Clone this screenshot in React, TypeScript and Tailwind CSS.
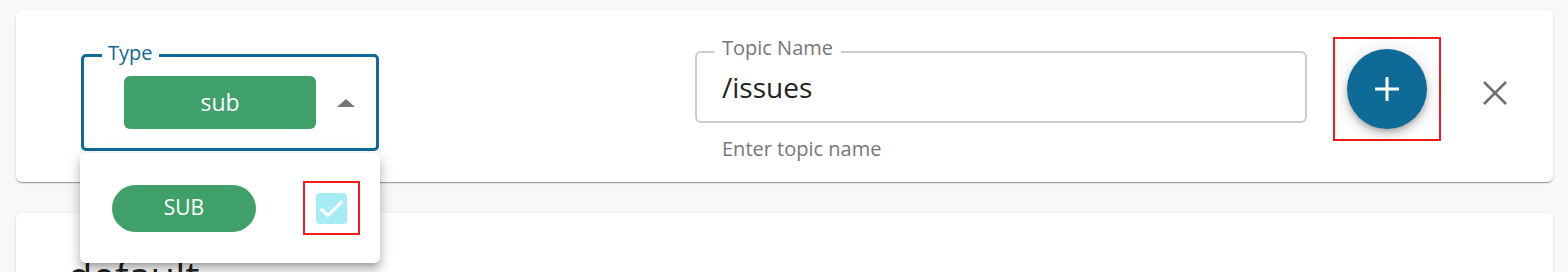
import React from 'react';

const cardShadow =
  'shadow-[0_2px_1px_-1px_rgba(0,0,0,0.2),0_1px_1px_0_rgba(0,0,0,0.14),0_1px_3px_0_rgba(0,0,0,0.12)]';

const TypeSelect: React.FC = () => (
  <div className="relative mt-[3px] flex h-[97px] w-[298px] shrink-0 items-center rounded-[5px] border-[3px] border-[#0e6a96] pl-[40px] pr-[21px]">
    <span className="absolute left-[18px] top-[-16px] bg-white px-[6px] text-[20px] leading-6 text-[#0e6a96]">
      Type
    </span>
    <div className="flex h-[53px] w-[192px] items-center justify-center rounded-md bg-[#3fa06a] text-[23px] text-white">
      sub
    </div>
    <svg width="18" height="8" viewBox="0 0 18 8" className="ml-[21px]">
      <path d="M0 8 L9 0 L18 8 Z" fill="#767676" />
    </svg>

    {/* open dropdown */}
    <div className="absolute left-[-4px] top-[96px] z-20 flex h-[110px] w-[300px] items-center rounded-md bg-white pl-[32px] pr-[20px] shadow-[0_5px_5px_-3px_rgba(0,0,0,0.2),0_8px_10px_1px_rgba(0,0,0,0.14),0_3px_14px_2px_rgba(0,0,0,0.12)]">
      <div className="flex h-[47px] w-[144px] items-center justify-center rounded-full bg-[#3fa06a] text-[21px] text-white">
        SUB
      </div>
      <div className="ml-auto flex h-[54px] w-[57px] items-center justify-center border-2 border-[#ee1c1c]">
        <div className="flex h-[31px] w-[31px] items-center justify-center rounded-[4px] bg-[#a6ecf4]">
          <svg width="25" height="25" viewBox="0 0 24 24">
            <path d="M1.5 12.5 L8.5 18.5 L22.5 5" fill="none" stroke="white" strokeWidth="3" />
          </svg>
        </div>
      </div>
    </div>
  </div>
);

const TopicField: React.FC = () => (
  <div className="ml-[316px] shrink-0">
    <div className="relative flex h-[72px] w-[612px] items-center rounded-[6px] border-2 border-[#cccccc] pl-[25px]">
      <span className="absolute left-[17px] top-[-17px] bg-white px-[8px] text-[20px] leading-6 text-[#777777]">
        Topic Name
      </span>
      <span className="text-[28px] text-[#222222]">/issues</span>
    </div>
    <div className="mt-[12px] pl-[27px] text-[20px] leading-7 text-[#777777]">Enter topic name</div>
  </div>
);

export default function App() {
  return (
    <div className="min-h-screen bg-[#f8f8f8] pl-4 pr-[15px] pt-[10px] font-['Open_Sans',sans-serif]">
      <div className={`relative z-10 flex h-[172px] items-start rounded-md bg-white pl-[65px] pt-[41px] ${cardShadow}`}>
        <TypeSelect />
        <TopicField />
        <div className="ml-[26px] mt-[-14px] flex h-[104px] w-[108px] shrink-0 items-center justify-center border-2 border-[#ee1c1c]">
          <button className="flex h-[80px] w-[80px] items-center justify-center rounded-full bg-[#0e6a96] shadow-[0_3px_5px_-1px_rgba(0,0,0,0.2),0_6px_10px_0_rgba(0,0,0,0.14),0_1px_18px_0_rgba(0,0,0,0.12)]">
            <svg width="24" height="24" viewBox="0 0 24 24">
              <path d="M12 0 V24 M0 12 H24" stroke="white" strokeWidth="3" />
            </svg>
          </button>
        </div>
        <svg width="24" height="24" viewBox="0 0 24 24" className="ml-[42px] mt-[30px] shrink-0">
          <path d="M1 1 L23 23 M23 1 L1 23" stroke="#707070" strokeWidth="2.6" />
        </svg>
      </div>

      <div className={`mt-[31px] h-[120px] rounded-md bg-white pl-[52px] pt-[39px] ${cardShadow}`}>
        <div className="text-[40px] leading-[48px] text-[#222222]">default</div>
      </div>
    </div>
  );
}
